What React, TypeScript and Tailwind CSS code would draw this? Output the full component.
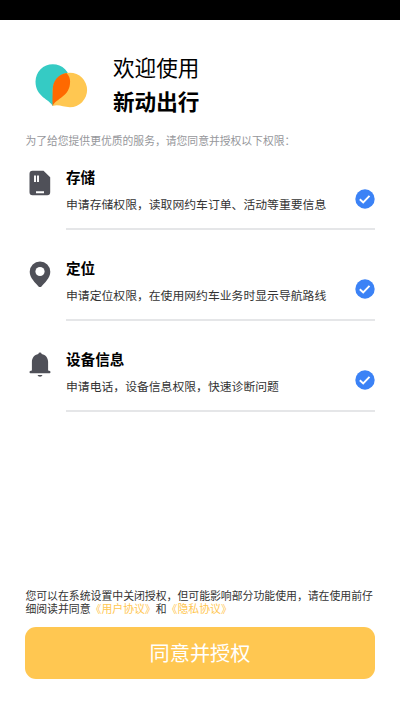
import * as React from "react";

interface Permission {
  title: string;
  desc: string;
  icon: React.ReactNode;
}

function Logo() {
  return (
    <svg viewBox="0 0 54 44" className="w-[54px] h-[44px]">
      <path
        d="M17.700 42 C15 35.500 .5 33 .5 17.500 A17.300 17.300 0 0 1 35.100 17.500 C35.100 33 21 34 17.700 42 Z"
        fill="#35cbc4"
      />
      <path
        d="M17.700 42 C18.800 36 17.700 31.500 17.700 26 A17.200 17.200 0 1 1 34.900 43.200 C28 43.200 24 40 17.700 42 Z"
        fill="#ffc751"
      />
      <path
        d="M17.700 42 C17.200 36 17.700 31.500 17.700 26 C17.700 17.500 22.700 10.500 31.500 9.100 C34 11.500 35.100 14.500 35.100 17.500 C35.100 33 21 34 17.700 42 Z"
        fill="#ff6900"
      />
    </svg>
  );
}

function StorageIcon() {
  return (
    <svg viewBox="0 0 22 26" className="w-[22px] h-[26px]">
      <path
        d="M3.500 .8 H14.500 L21.200 7.300 V22.300 A3 3 0 0 1 18.200 25.300 H3.500 A3 3 0 0 1 .5 22.300 V3.800 A3 3 0 0 1 3.500 .8 Z"
        fill="#4f5058"
      />
      <path d="M6 5.500 V12 M9 5.500 V12 M7 22.300 H15" stroke="#fff" strokeWidth="1.900" fill="none" />
    </svg>
  );
}

function LocationIcon() {
  return (
    <svg viewBox="0 0 22 26" className="w-[22px] h-[26px]">
      <path
        d="M11 .5 A10.300 10.300 0 0 1 21.300 10.800 C21.300 17 15.500 22 12.500 25.500 Q11 27 9.500 25.500 C6.500 22 .7 17 .7 10.800 A10.300 10.300 0 0 1 11 .5 Z"
        fill="#4f5058"
      />
      <circle cx="11" cy="10.500" r="4.600" fill="#fff" />
    </svg>
  );
}

function BellIcon() {
  return (
    <svg viewBox="0 0 22 26" className="w-[22px] h-[26px]">
      <path
        d="M9.300 1.900 A1.750 1.750 0 0 1 12.700 1.900 C16.800 2.700 19.100 6 19.100 9.800 V18.400 L20.900 19.100 A1.200 1.200 0 0 1 20.600 21.300 H1.400 A1.200 1.200 0 0 1 1.100 19.100 L2.900 18.400 V9.800 C2.900 6 5.200 2.700 9.300 1.900 Z"
        fill="#4f5058"
      />
      <path d="M8.500 23 H13.500 A2.600 2.300 0 0 1 8.500 23 Z" fill="#4f5058" />
    </svg>
  );
}

function CheckIcon() {
  return (
    <svg viewBox="0 0 20 20" className="w-5 h-5">
      <circle cx="10" cy="10" r="9.700" fill="#3b82f6" />
      <path d="M4.800 10.300 L8.200 13.500 L14.500 6.800" stroke="#fff" strokeWidth="1.900" fill="none" />
    </svg>
  );
}

const permissions: Permission[] = [
  { title: "存储", desc: "申请存储权限，读取网约车订单、活动等重要信息", icon: <StorageIcon /> },
  { title: "定位", desc: "申请定位权限，在使用网约车业务时显示导航路线", icon: <LocationIcon /> },
  { title: "设备信息", desc: "申请电话，设备信息权限，快速诊断问题", icon: <BellIcon /> },
];

function PermissionRow({ title, desc, icon }: Permission) {
  return (
    <li className="flex h-[90.8px]">
      <div className="w-[40.6px] pl-1 pt-1">{icon}</div>
      <div className="flex h-[64px] flex-1 justify-between border-b-2 border-[#e5e6e8]">
        <div>
          <h2 className="text-[14.6px] leading-[22px] font-bold text-black">{title}</h2>
          <p className="mt-[7px] text-[11.83px] leading-[18px] whitespace-nowrap text-[#333]">{desc}</p>
        </div>
        <div className="pt-[22.5px]">
          <CheckIcon />
        </div>
      </div>
    </li>
  );
}

export default function App() {
  return (
    <div className="flex h-[710px] w-[400px] flex-col overflow-hidden bg-white font-['Noto_Sans_CJK_SC',sans-serif]">
      <div className="h-5 shrink-0 bg-black" />
      <main className="flex flex-1 flex-col pl-[25.4px] pr-[25.4px]">
        <header className="flex pt-[30px]">
          <div className="w-[87.6px] pl-[9.600px] pt-[13.500px]">
            <Logo />
          </div>
          <h1 className="text-[21.6px] leading-[34px] text-black">
            欢迎使用
            <br />
            <b>新动出行</b>
          </h1>
        </header>
        <p className="mt-[14px] text-[10.8px] leading-4 text-[#96979b]">
          为了给您提供更优质的服务，请您同意并授权以下权限：
        </p>
        <ul className="mt-[18px]">
          {permissions.map((p) => (
            <PermissionRow key={p.title} {...p} />
          ))}
        </ul>
        <footer className="mt-auto pb-[31.5px]">
          <div className="text-[10.86px] leading-[12.5px] whitespace-nowrap text-[#333]">
            <p>您可以在系统设置中关闭授权，但可能影响部分功能使用，请在使用前仔</p>
            <p>
              细阅读并同意<a className="text-[#ffc751]">《用户协议》</a>和
              <a className="text-[#ffc751]">《隐私协议》</a>
            </p>
          </div>
          <button className="mt-[13px] block h-[51.5px] w-full rounded-[11px] bg-[#ffc751] text-[20.2px] text-white">
            同意并授权
          </button>
        </footer>
      </main>
    </div>
  );
}
